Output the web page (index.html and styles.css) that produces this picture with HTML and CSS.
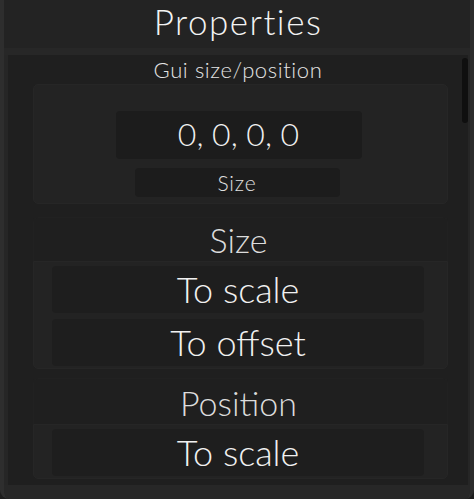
FILE: index.html
```html
<!DOCTYPE html>
<html lang="en">
<head>
<meta charset="utf-8">
<title>Properties</title>
<link rel="stylesheet" href="styles.css">
</head>
<body>
<div class="window">
  <div class="titlebar">Properties</div>
  <div class="band"></div>
  <div class="frame">
    <div class="scrollbar"></div>
    <div class="group-label">Gui size/position</div>
    <div class="card card-value">
      <div class="value-box">0, 0, 0, 0</div>
      <div class="value-name">Size</div>
    </div>
    <div class="section section-size">
      <div class="section-header">Size</div>
      <div class="card card-buttons">
        <div class="btn">To scale</div>
        <div class="btn">To offset</div>
      </div>
    </div>
    <div class="section section-position">
      <div class="section-header">Position</div>
      <div class="card card-buttons">
        <div class="btn">To scale</div>
      </div>
    </div>
  </div>
  <div class="footer"></div>
</div>
</body>
</html>
```
FILE: styles.css
```css
* { box-sizing: border-box; }
html, body {
  margin: 0;
  padding: 0;
  background: #1d1d1d;
  font-family: Lato, "Open Sans", sans-serif;
  font-weight: 300;
}
.window {
  width: 474px;
  height: 499px;
  background: #262626;
  border-left: 4px solid #2e2e2e;
  border-right: 4px solid #2c2c2c;
  border-radius: 0 0 9px 9px;
  display: flex;
  flex-direction: column;
  overflow: hidden;
}
.titlebar {
  height: 48px;
  flex: none;
  background: #232323;
  color: #f3f3f3;
  font-size: 35px;
  letter-spacing: 1.5px;
  line-height: 1;
  display: flex;
  align-items: center;
  justify-content: center;
  padding: 0 0 5px 2px;
}
.band {
  height: 7px;
  flex: none;
  background: #272727;
}
.frame {
  position: relative;
  height: 430px;
  flex: none;
  margin: 0 2px 0 4px;
  background: #1f1f1f;
  overflow: hidden;
  padding: 0 20px 0 25px;
}
.scrollbar {
  position: absolute;
  left: 454px;
  top: 3px;
  width: 6px;
  height: 65px;
  border-radius: 3px;
  background: #0f0f0f;
}
.group-label {
  height: 29px;
  display: flex;
  align-items: center;
  justify-content: center;
  color: #e4e4e4;
  font-size: 22px;
  letter-spacing: 0.6px;
  line-height: 1;
  padding-right: 5px;
}
.card {
  background: #232323;
  border: 1px solid #262626;
  border-radius: 5px;
}
.card-value {
  height: 120px;
  padding-top: 26px;
  display: flex;
  flex-direction: column;
  align-items: center;
  gap: 9px;
}
.value-box {
  width: 246px;
  height: 48px;
  background: #1c1c1c;
  border-radius: 4px;
  color: #f0f0f0;
  font-size: 32px;
  line-height: 1;
  display: flex;
  align-items: center;
  justify-content: center;
  padding-bottom: 2px;
  margin-left: -4px;
}
.value-name {
  width: 205px;
  height: 29px;
  background: #1c1c1c;
  border-radius: 4px;
  color: #e0e0e0;
  font-size: 21px;
  letter-spacing: 0.8px;
  line-height: 1;
  display: flex;
  align-items: center;
  justify-content: center;
  margin-left: -7px;
}
.section-size { margin-top: 13px; }
.section-position { margin-top: 9px; }
.section-header {
  height: 44px;
  background: #1f1f1f;
  border: 1px solid #212121;
  border-bottom: none;
  border-radius: 5px 5px 0 0;
  color: #dcdcdc;
  font-size: 34px;
  line-height: 1;
  display: flex;
  align-items: center;
  justify-content: center;
  padding: 0 4px 0 0;
}
.section-position .section-header { height: 46px; padding-top: 2px; }
.card-buttons {
  border-radius: 0 0 5px 5px;
  padding: 4px 23px 2px 18px;
  display: flex;
  flex-direction: column;
  gap: 6px;
}
.btn {
  height: 47px;
  background: #1e1e1e;
  border-radius: 4px;
  color: #f1f1f1;
  font-size: 36px;
  line-height: 1;
  display: flex;
  align-items: center;
  justify-content: center;
  padding-bottom: 2px;
}
.footer {
  flex: 1;
  background: #272727;
}
```
